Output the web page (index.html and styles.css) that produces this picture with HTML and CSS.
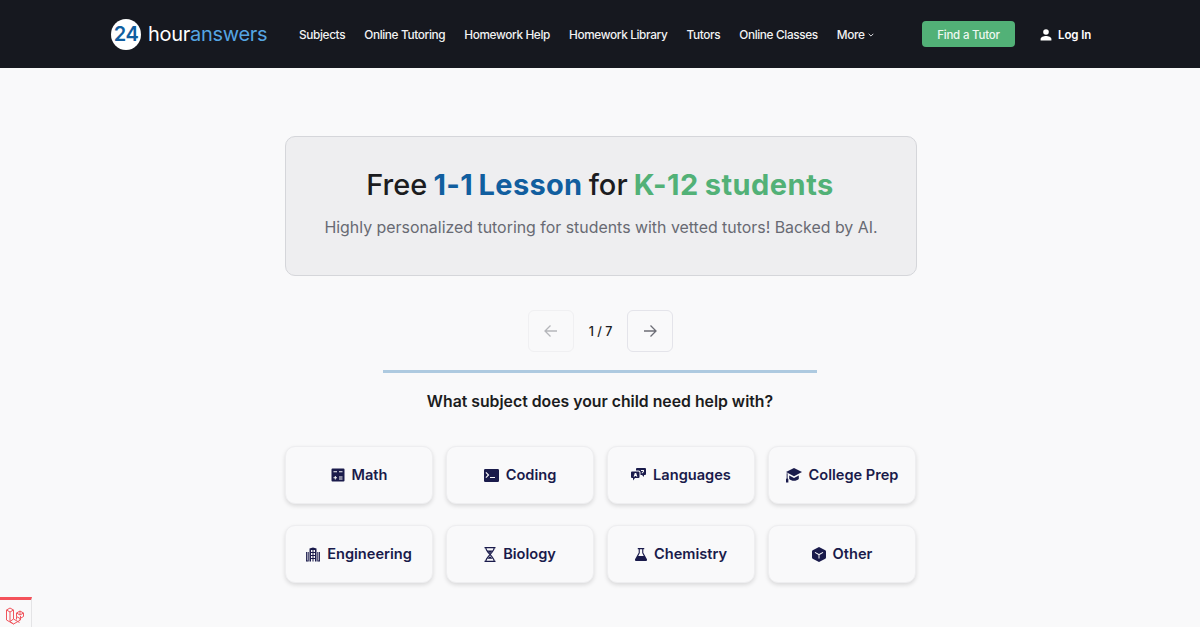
FILE: index.html
```html
<!DOCTYPE html>
<html lang="en">
<head>
    <meta charset="UTF-8">
    <meta name="viewport" content="width=device-width, initial-scale=1.0">
    <title>24HourAnswers - Free 1-1 Lesson</title>
    <link rel="stylesheet" href="styles.css">
</head>
<body>

    <header class="site-header">
        <a class="logo" href="#">
            <span class="logo-badge">24</span>
            <span class="logo-word">hour<span class="logo-accent">answers</span></span>
        </a>
        <nav class="main-nav">
            <a href="#">Subjects</a>
            <a href="#">Online Tutoring</a>
            <a href="#">Homework Help</a>
            <a href="#">Homework Library</a>
            <a href="#">Tutors</a>
            <a href="#">Online Classes</a>
            <a href="#" class="nav-more">More
                <svg width="6" height="4" viewBox="0 0 6 4"><path d="M.7.8 3 3.1 5.3.8" fill="none" stroke="#d8d9dc" stroke-width="1"/></svg>
            </a>
        </nav>
        <a class="find-tutor" href="#">Find a Tutor</a>
        <a class="login" href="#">
            <svg width="12" height="12" viewBox="0 0 12 12"><circle cx="6" cy="3" r="2.8" fill="#fff"/><path d="M.6 11.6V10c0-1.8 3-2.9 5.4-2.9s5.400 1.100 5.400 2.900v1.600z" fill="#fff"/></svg>
            Log In
        </a>
    </header>

    <main class="wizard">
        <section class="hero">
            <h1>Free <span class="blue">1-1 Lesson</span> for <span class="green">K-12 students</span></h1>
            <p>Highly personalized tutoring for students with vetted tutors! Backed by AI.</p>
        </section>

        <div class="pager">
            <button class="page-btn disabled">
                <svg width="16" height="14" viewBox="0 0 16 14"><path d="M14 7H2M7.500 1.500 2 7l5.500 5.500" fill="none" stroke="currentColor" stroke-width="1.300"/></svg>
            </button>
            <span class="page-count">1 / 7</span>
            <button class="page-btn">
                <svg width="16" height="14" viewBox="0 0 16 14"><path d="M2 7h12M8.500 1.500 14 7l-5.500 5.500" fill="none" stroke="currentColor" stroke-width="1.300"/></svg>
            </button>
        </div>

        <div class="progress"></div>
        <h2>What subject does your child need help with?</h2>

        <div class="subjects">
            <button class="subject">
                <svg width="14" height="14" viewBox="0 0 14 14"><path fill-rule="evenodd" d="M1.500.5h11a1 1 0 0 1 1 1v11a1 1 0 0 1-1 1h-11a1 1 0 0 1-1-1v-11a1 1 0 0 1 1-1zM2.500 3.200v1h3.500v-1zM8 3.200v1h3.500v-1zM2.500 9.200v1h1.300v1.300h1v-1.300h1.200v-1H4.800V8h-1v1.200zM8 8.500v1h3.500v-1zM8 10.500v1h3.500v-1z"/></svg>
                Math
            </button>
            <button class="subject">
                <svg width="15" height="13" viewBox="0 0 15 13"><path fill-rule="evenodd" d="M1.200 0h12.600A1.200 1.200 0 0 1 15 1.200v10.600a1.200 1.200 0 0 1-1.200 1.200H1.200A1.200 1.200 0 0 1 0 11.800V1.200A1.200 1.200 0 0 1 1.200 0zM2.300 3l-.8.800L3.700 6 1.500 8.200l.8.800 3-3zM6 8v1h5V8z"/></svg>
                Coding
            </button>
            <button class="subject">
                <svg width="15" height="14" viewBox="0 0 15 14"><path fill-rule="evenodd" d="M6 0h8a1 1 0 0 1 1 1v5a1 1 0 0 1-1 1h-1v2l-2-2H9.500V4.500a2 2 0 0 0-2-2H5V1a1 1 0 0 1 1-1zM1 3.500h6.500a1 1 0 0 1 1 1V9a1 1 0 0 1-1 1H4l-2 2.500V10H1a1 1 0 0 1-1-1V4.500a1 1 0 0 1 1-1zM2.600 8.800h1l.2-.8h1.400l.2.800h1L5.200 5H3.800zM10 2v1h2.300L10.500 5l.7.6L13 3.700V2z"/></svg>
                Languages
            </button>
            <button class="subject">
                <svg width="16" height="15" viewBox="0 0 15 14"><path d="M7.500 0 0 3.800l7.500 3.900L15 3.800z"/><path d="M3 7v3.300c1 1.100 2.800 1.700 4.500 1.700s3.500-.6 4.500-1.700V7L7.500 9.300z"/><path d="M.6 5h.9v4.500l.7 1v3H0v-3l.6-1z"/></svg>
                College Prep
            </button>
            <button class="subject">
                <svg width="14" height="15" viewBox="0 0 14 15"><path fill-rule="evenodd" d="M3.500 1.500 7 .5l3.500 1v13h-7zM5 3v2h1.500V3zM7.500 3v2H9V3zM5 6v2h1.500V6zM7.500 6v2H9V6zM5 9v2h1.500V9zM7.500 9v2H9V9zM5 12v2.500h1.500V12zM7.500 12v2.500H9V12z"/><path d="M0 14.500V5h.9v8.500h.7V5h1.100v9.500zM14 14.500V5h-.9v8.500h-.7V5h-1.100v9.500z"/></svg>
                Engineering
            </button>
            <button class="subject">
                <svg width="12" height="15" viewBox="0 0 12 15"><path d="M.5.700h11M.5 14.300h11M1.800.7c0 4.500 8.400 9 8.400 13.600M10.200.7c0 4.600-8.400 9.100-8.400 13.600" fill="none" stroke="currentColor" stroke-width="1.200"/><path d="M3 3.500h6L6 6.200zM3 11.800l3-2.600 3 2.600z"/></svg>
                Biology
            </button>
            <button class="subject">
                <svg width="12" height="13" viewBox="0 0 13 14"><path fill-rule="evenodd" d="M3 0h7v1.200H9V5l3.800 7a1.300 1.300 0 0 1-1.200 2H1.400A1.300 1.300 0 0 1 .2 12L4 5V1.200H3zM5.200 1.200v4.100L3.500 8.500h6L7.800 5.300V1.200z"/></svg>
                Chemistry
            </button>
            <button class="subject">
                <svg width="14" height="15" viewBox="0 0 14 15"><path fill-rule="evenodd" d="M7 0l6.300 3.300a1.300 1.300 0 0 1 .7 1.100v6.200a1.300 1.300 0 0 1-.7 1.100L7 15 .7 11.700A1.300 1.300 0 0 1 0 10.600V4.400a1.300 1.300 0 0 1 .7-1.100zM3.200 4.900 2.700 5.800l3.800 2.100v3.600h1V7.900l3.800-2.100-.5-.9L7 7z"/></svg>
                Other
            </button>
        </div>
    </main>

    <div class="debug-bar">
        <svg width="20" height="20" viewBox="0 0 20 20" fill="none" stroke="#f0545c" stroke-width="1"><path d="M1.500 4 5 2l3.500 2v9l6 3.500M1.500 4v10l7 4 7-4v-4M5 6 1.500 4M5 6l3.500-2M5 6v9.500l3.500 2.500M8.500 13 5 15.500M15 5l3.500 2v3.500L15 12.500l-3.500-2V7zM15 5v4l3.500-2M15 9l-3.500-2M15 12.500v1.500M11.500 10.500v3"/></svg>
    </div>

</body>
</html>
```

FILE: styles.css
```css
* {
    box-sizing: border-box;
}

body {
    margin: 0;
    height: 627px;
    overflow: hidden;
    background-color: #f9f9fa;
    font-family: Inter, "Noto Sans", sans-serif;
    color: #16181f;
}

a {
    text-decoration: none;
    color: inherit;
}

.site-header {
    height: 68px;
    padding-left: 111px;
    display: flex;
    align-items: center;
    background-color: #16181f;
    color: #fff;
}

.logo {
    display: flex;
    align-items: center;
    gap: 7px;
    width: 188px;
}

.logo-badge {
    width: 30px;
    height: 31px;
    border-radius: 50%;
    background: #fff;
    color: #115e9f;
    display: flex;
    align-items: center;
    justify-content: center;
    font-size: 20px;
    font-weight: 600;
    letter-spacing: -0.5px;
}

.logo-word {
    font-size: 20px;
    font-weight: 400;
    letter-spacing: -0.3px;
}

.logo-accent {
    color: #55a5e2;
}

.main-nav {
    display: flex;
    align-items: center;
    gap: 19px;
    padding-top: 1px;
    font-size: 11.800px;
    font-weight: 500;
    letter-spacing: -0.35px;
    white-space: nowrap;
    color: #f2f2f3;
    width: 623px;
}

.nav-more svg {
    margin-left: 1px;
    vertical-align: 2px;
}

.find-tutor {
    width: 93px;
    height: 26px;
    padding-top: 1px;
    border-radius: 4px;
    background-color: #52b177;
    display: flex;
    align-items: center;
    justify-content: center;
    font-size: 11.500px;
    font-weight: 500;
    letter-spacing: -0.2px;
    color: #eef8f1;
}

.login {
    margin-left: 25px;
    padding-top: 1px;
    display: flex;
    align-items: center;
    gap: 6px;
    font-size: 11.500px;
    font-weight: 600;
    letter-spacing: -0.1px;
}

.wizard {
    width: 632px;
    margin: 68px 0 0 285px;
    display: flex;
    flex-direction: column;
    align-items: center;
}

.hero {
    width: 100%;
    height: 140px;
    padding-top: 29px;
    background-color: #eeeef0;
    border: 1px solid #d5d6da;
    border-radius: 10px;
    text-align: center;
}

.hero h1 {
    margin: 0;
    padding-right: 2px;
    font-size: 29px;
    line-height: 38px;
    font-weight: 500;
    word-spacing: -1.5px;
    color: #1b1c20;
}

.hero .blue {
    color: #115e9f;
    font-weight: 700;
    letter-spacing: 0.3px;
}

.hero .green {
    color: #52b177;
    font-weight: 700;
    letter-spacing: 0.5px;
}

.hero p {
    margin: 12px 0 0;
    font-size: 15.900px;
    line-height: 24px;
    color: #686a73;
}

.pager {
    margin: 34px 1px 0 0;
    display: flex;
    align-items: center;
    gap: 14px;
}

.page-btn {
    width: 46px;
    height: 42px;
    padding: 0;
    background: transparent;
    border: 1px solid #e4e4ea;
    border-radius: 6px;
    color: #6d6e76;
    display: flex;
    align-items: center;
    justify-content: center;
}

.page-btn.disabled {
    border-color: #f0f0f2;
    color: #b5b6ba;
}

.page-count {
    font-size: 12.500px;
    width: 25px;
    text-align: center;
    white-space: nowrap;
    font-weight: 500;
    color: #1b1c20;
}

.progress {
    width: 434px;
    height: 3px;
    margin: 18px 2px 0 0;
    background-color: #aecae0;
}

h2 {
    margin: 17px 2px 0 0;
    font-size: 15.800px;
    line-height: 24px;
    font-weight: 600;
    color: #1b1c20;
}

.subjects {
    width: 100%;
    margin-top: 32px;
    display: grid;
    grid-template-columns: repeat(4, 148px);
    column-gap: 13px;
    row-gap: 21px;
}

.subject {
    height: 58px;
    padding: 0;
    background-color: #f9f9fa;
    border: 1px solid #eeeef0;
    border-radius: 10px;
    box-shadow: 0 2px 4px rgba(0, 0, 0, 0.13);
    color: #1a1b4b;
    font-family: inherit;
    font-size: 14.600px;
    font-weight: 600;
    display: flex;
    align-items: center;
    justify-content: center;
    gap: 7px;
}

.subject svg {
    fill: currentColor;
}

/* laravel debugbar tab */
.debug-bar {
    position: fixed;
    left: 0;
    bottom: 0;
    width: 32px;
    height: 30px;
    padding: 6px 0 0 5px;
    background-color: #f9f9fa;
    border-top: 3px solid #f4525a;
    border-right: 1px solid #e4e4e6;
}
```
